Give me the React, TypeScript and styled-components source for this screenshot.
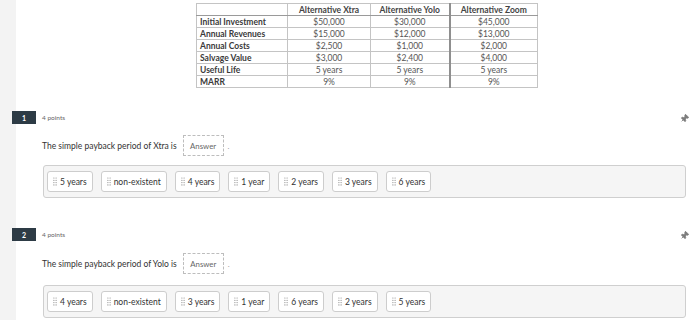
import React from "react";
import styled, { createGlobalStyle } from "styled-components";
import { Pin } from "lucide-react";

const GlobalStyle = createGlobalStyle`
  html, body { margin: 0; padding: 0; background: #fff; }
  body { font-family: Lato, "Open Sans", "Liberation Sans", sans-serif; color: #333; }
  * { box-sizing: border-box; }
`;

const Page = styled.div`
  width: 700px;
  height: 320px;
  overflow: hidden;
  background: linear-gradient(to right, #f3f3f3 16px, #fff 16px);
  padding: 3px 14px 0 12px;
`;

const TableWrap = styled.div`
  margin-left: 184px;
`;

const DataTable = styled.table`
  border-collapse: collapse;
  table-layout: fixed;
  width: 341px;
  font-size: 8.5px;
  line-height: 10px;
`;

const Th = styled.th<{ $w: number; $thick?: boolean }>`
  width: ${(p) => p.$w}px;
  height: 12px;
  padding: 0 3px;
  font-weight: 700;
  color: #444;
  text-align: center;
  white-space: nowrap;
  border: 1px solid #c4c4c4;
  border-bottom-color: #9a9a9a;
  ${(p) => (p.$thick ? "border-left: 2px solid #8f8f8f;" : "")}
`;

const Label = styled.td`
  height: 12px;
  padding: 0 3px;
  font-weight: 700;
  color: #3a3a3a;
  text-align: left;
  white-space: nowrap;
  border: 1px solid #c4c4c4;
`;

const Cell = styled.td<{ $thick?: boolean }>`
  height: 12px;
  padding: 0 3px;
  color: #555;
  text-align: center;
  white-space: nowrap;
  border: 1px solid #c4c4c4;
  ${(p) => (p.$thick ? "border-left: 2px solid #8f8f8f;" : "")}
`;

const Question = styled.section<{ $top: number }>`
  margin-top: ${(p) => p.$top}px;
`;

const QHeader = styled.div`
  display: flex;
  align-items: center;
  height: 13px;
`;

const Badge = styled.div`
  width: 24px;
  height: 13px;
  background: #2d3b45;
  color: #fff;
  font-size: 7px;
  font-weight: 700;
  display: flex;
  align-items: center;
  justify-content: center;
`;

const Points = styled.span`
  margin-left: 6px;
  font-size: 6.5px;
  color: #666;
  flex: 1;
`;

const PinIcon = styled.span`
  display: flex;
  color: #7d7d7d;
  margin-right: -3px;
  margin-top: 2px;
  transform: rotate(45deg);
`;

const QBody = styled.div`
  padding-left: 30px;
`;

const Prompt = styled.div<{ $gap: number }>`
  margin-top: ${(p) => p.$gap}px;
  display: flex;
  align-items: center;
  font-size: 8.5px;
  color: #333;
  height: 21px;
`;

const AnswerBox = styled.span`
  margin-left: 6px;
  width: 41px;
  height: 21px;
  border: 1px dashed #bdbdbd;
  display: inline-flex;
  align-items: center;
  justify-content: center;
  font-size: 7.8px;
  color: #666;
`;

const Dot = styled.span`
  margin-left: 4px;
  color: #999;
  font-size: 8px;
`;

const DropZone = styled.div<{ $gap: number }>`
  margin-top: ${(p) => p.$gap}px;
  margin-left: 1px;
  height: 33px;
  background: #f5f5f5;
  border: 1px solid #cfcfcf;
  border-radius: 3px;
  display: flex;
  align-items: center;
  gap: 8px;
  padding: 0 3px;
`;

const Chip = styled.div`
  height: 21px;
  background: #fff;
  border: 1px solid #cdcdcd;
  border-radius: 3px;
  display: flex;
  align-items: center;
  gap: 3px;
  padding: 0 5px;
  font-size: 8.5px;
  color: #333;
  white-space: nowrap;
`;

const Grip = () => (
  <svg width="4" height="9" viewBox="0 0 4 9">
    {[0.9, 3.1].map((x) =>
      [1, 3.3, 5.6, 7.9].map((y) => (
        <circle key={`${x}-${y}`} cx={x} cy={y} r={0.6} fill="#8c8c8c" />
      ))
    )}
  </svg>
);

const rows: [string, string, string, string][] = [
  ["Initial Investment", "$50,000", "$30,000", "$45,000"],
  ["Annual Revenues", "$15,000", "$12,000", "$13,000"],
  ["Annual Costs", "$2,500", "$1,000", "$2,000"],
  ["Salvage Value", "$3,000", "$2,400", "$4,000"],
  ["Useful Life", "5 years", "5 years", "5 years"],
  ["MARR", "9%", "9%", "9%"],
];

type Q = { n: number; name: string; opts: string[]; top: number; g1: number; g2: number };

const questions: Q[] = [
  {
    n: 1,
    name: "Xtra",
    opts: ["5 years", "non-existent", "4 years", "1 year", "2 years", "3 years", "6 years"],
    top: 23,
    g1: 11,
    g2: 9,
  },
  {
    n: 2,
    name: "Yolo",
    opts: ["4 years", "non-existent", "3 years", "1 year", "6 years", "2 years", "5 years"],
    top: 30,
    g1: 12,
    g2: 11,
  },
];

export default function App() {
  return (
    <>
      <GlobalStyle />
      <Page>
        <TableWrap>
          <DataTable>
            <thead>
              <tr>
                <Th $w={91}></Th>
                <Th $w={83}>Alternative Xtra</Th>
                <Th $w={79}>Alternative Yolo</Th>
                <Th $w={88} $thick>
                  Alternative Zoom
                </Th>
              </tr>
            </thead>
            <tbody>
              {rows.map((r) => (
                <tr key={r[0]}>
                  <Label>{r[0]}</Label>
                  <Cell>{r[1]}</Cell>
                  <Cell>{r[2]}</Cell>
                  <Cell $thick>{r[3]}</Cell>
                </tr>
              ))}
            </tbody>
          </DataTable>
        </TableWrap>

        {questions.map((q) => (
          <Question key={q.n} $top={q.top}>
            <QHeader>
              <Badge>{q.n}</Badge>
              <Points>4 points</Points>
              <PinIcon>
                <Pin size={9} strokeWidth={2.2} fill="currentColor" />
              </PinIcon>
            </QHeader>
            <QBody>
              <Prompt $gap={q.g1}>
                The simple payback period of {q.name} is
                <AnswerBox>Answer</AnswerBox>
                <Dot>.</Dot>
              </Prompt>
              <DropZone $gap={q.g2}>
                {q.opts.map((o) => (
                  <Chip key={o}>
                    <Grip />
                    {o}
                  </Chip>
                ))}
              </DropZone>
            </QBody>
          </Question>
        ))}
      </Page>
    </>
  );
}
